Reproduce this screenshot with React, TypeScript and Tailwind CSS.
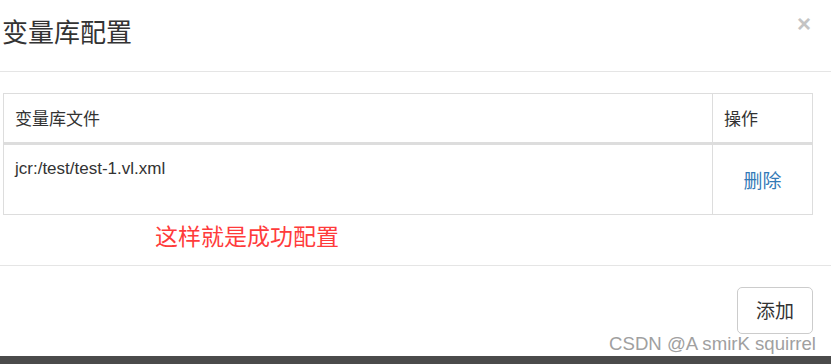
import React from 'react';

const CJK = '"Noto Sans CJK SC", "Liberation Sans", sans-serif';

const App: React.FC = () => {
  return (
    <div
      className="relative w-[831px] h-[364px] overflow-hidden bg-white text-[#333]"
      style={{ fontFamily: CJK }}
    >
      {/* modal header */}
      <div className="h-[72px] border-b border-[#e5e5e5] flex items-start justify-between pl-[2px] pr-[20px]">
        <h4 className="mt-[12px] text-[26px] leading-[38px] font-normal text-[#333]">变量库配置</h4>
        <button className="mt-[12px] text-[24px] leading-[24px] font-bold text-[#c4c4c4]" style={{ fontFamily: '"Liberation Sans", sans-serif' }}>
          ×
        </button>
      </div>

      {/* modal body */}
      <div className="h-[194px] border-b border-[#e5e5e5] pt-[21px] pl-[3px]">
        <table className="w-[810px] border-collapse border border-[#ddd] text-[17px]">
          <thead>
            <tr className="h-[50px]">
              <th className="border border-[#ddd] border-b-[3px] text-left font-normal pl-[11px] align-middle">变量库文件</th>
              <th className="w-[100px] border border-[#ddd] border-b-[3px] text-left font-normal pl-[11px] align-middle">操作</th>
            </tr>
          </thead>
          <tbody>
            <tr className="h-[71px]">
              <td className="border border-[#ddd] align-top pl-[11px] pt-[11px] text-[17px]" style={{ fontFamily: '"Liberation Sans", sans-serif' }}>
                jcr:/test/test-1.vl.xml
              </td>
              <td className="border border-[#ddd] align-middle text-center pt-[2px]">
                <a className="text-[19px] text-[#337ab7] cursor-pointer">删除</a>
              </td>
            </tr>
          </tbody>
        </table>
        <div className="mt-[4px] pl-[152px] text-[23px] leading-[32px] text-[#ff3b3b]">这样就是成功配置</div>
      </div>

      {/* modal footer */}
      <div className="flex justify-end pt-[21px] pr-[18px]">
        <button className="w-[76px] h-[47px] border border-[#ccc] rounded-[5px] bg-white text-[19px] text-[#333]">添加</button>
      </div>

      {/* watermark */}
      <div
        className="absolute right-[15px] bottom-[9px] text-[18.6px] leading-[22px] text-[#a0a0a0]"
        style={{ fontFamily: '"Liberation Sans", sans-serif', textShadow: '0 0 1px #fff' }}
      >
        CSDN @A smirK squirrel
      </div>

      {/* bottom strip */}
      <div className="absolute left-0 right-0 bottom-0 h-[8px] bg-[#4b4b4b]" />
    </div>
  );
};

export default App;
